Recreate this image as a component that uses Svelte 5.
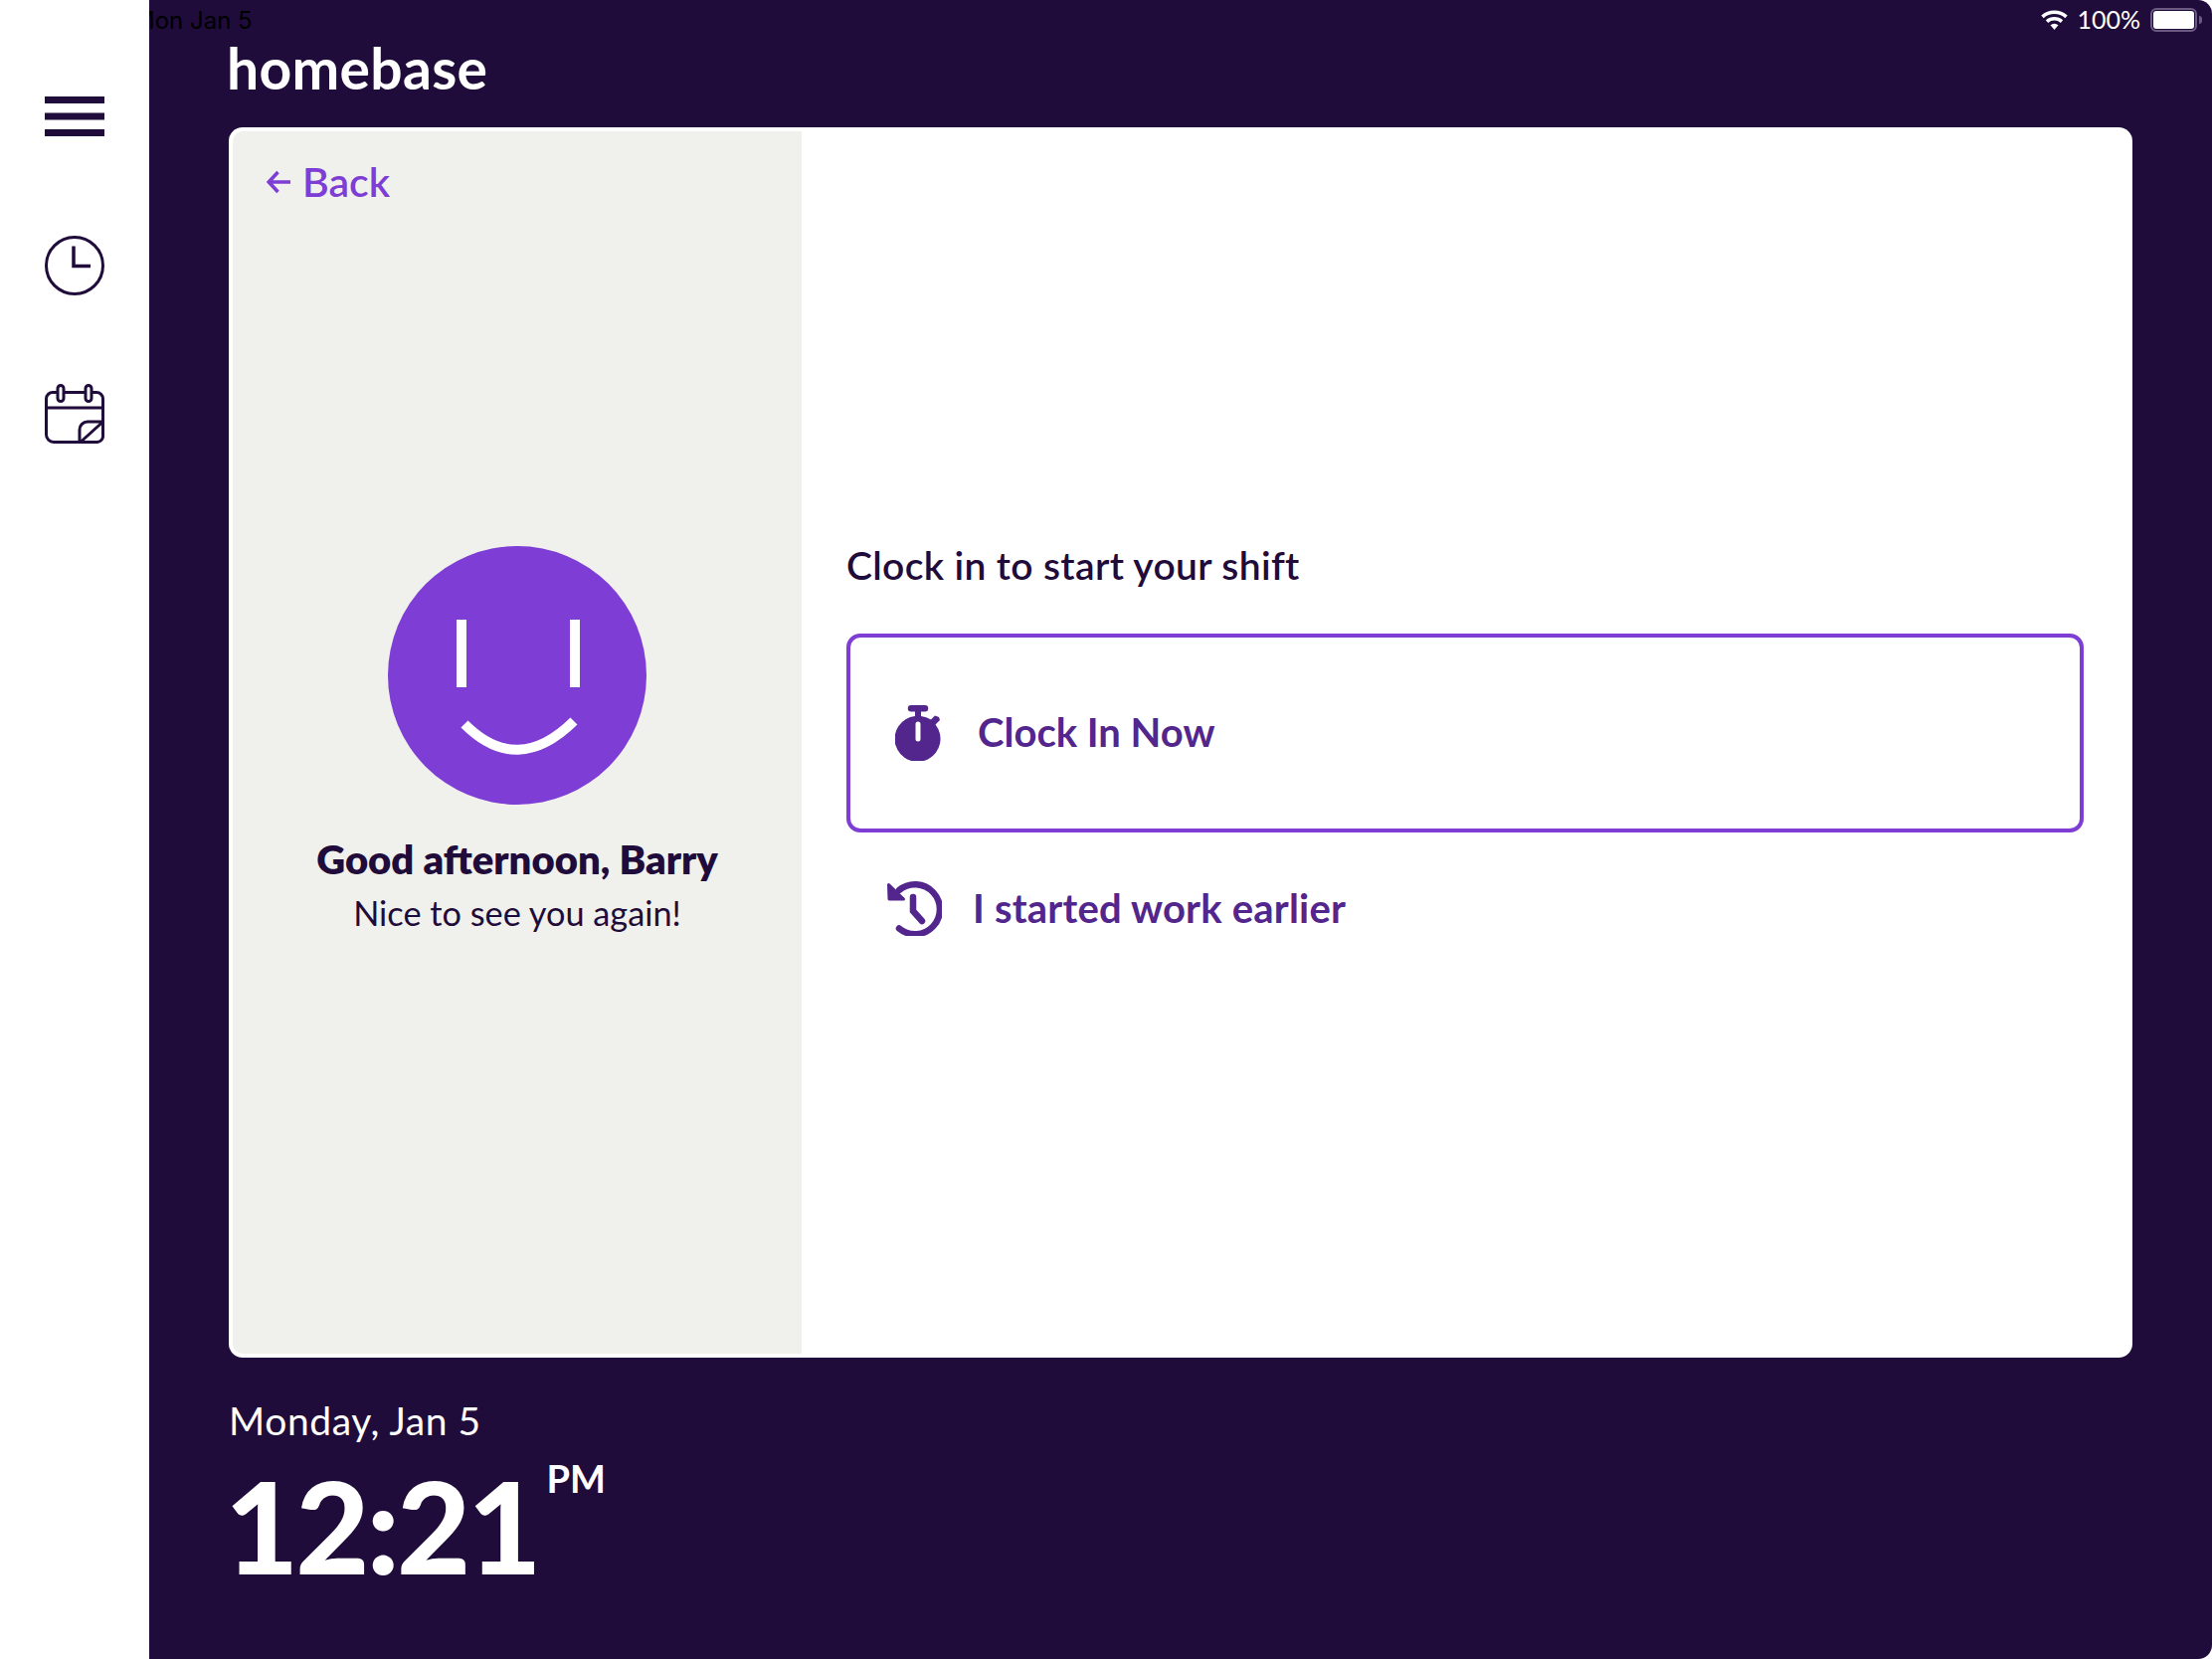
<script>
  const ink = '#1f0c3a';
</script>

<div class="screen">
  <nav class="rail">
    <svg class="i-menu" viewBox="0 0 60 40" aria-label="Menu"><path d="M0 3.500h60M0 20h60M0 36.500h60" stroke={ink} stroke-width="7" fill="none"/></svg>
    <svg class="i-clock" viewBox="0 0 60 60" aria-label="Clock"><circle cx="30" cy="30" r="28.500" fill="none" stroke={ink} stroke-width="3"/><path d="M29 10.500v20h17" fill="none" stroke={ink} stroke-width="3.500"/></svg>
    <svg class="i-cal" viewBox="0 0 60 60" aria-label="Schedule" fill="none" stroke={ink} stroke-width="3">
      <path d="M13 8.500H8a6.500 6.500 0 0 0-6.500 6.500v36A7.500 7.500 0 0 0 9 58.500h44a6 6 0 0 0 5.500-6.500V15A6.500 6.500 0 0 0 52 8.500h-5M19 8.500h22M1.500 24h57"/>
      <rect x="13" y="1.500" width="6" height="16" rx="3"/><rect x="41" y="1.500" width="6" height="16" rx="3"/>
      <path d="M35 58.500V46a8 8 0 0 1 8-8h15.500M37 57.500 58 38.500"/>
    </svg>
  </nav>

  <main class="main">
    <div class="status">
      <span class="carrier">Mon Jan 5</span>
      <div class="status-right">
        <svg class="wifi" viewBox="0 0 27 20" aria-hidden="true"><path d="M13.500 20l-4-4.700a6 6 0 0 1 8 0z" fill="#fff"/><path d="M1.500 6.800a18 18 0 0 1 24 0M6 11.600a11.500 11.500 0 0 1 15 0" fill="none" stroke="#fff" stroke-width="3.600"/></svg>
        <span class="pct">100%</span>
        <span class="batt"><span class="batt-fill"></span></span>
        <span class="nub"></span>
      </div>
    </div>

    <h1 class="brand">homebase</h1>

    <section class="card">
      <aside class="left">
        <a class="back" href="#back">
          <svg class="arrow" viewBox="0 0 25 24" aria-hidden="true"><path d="M24 12H3M11.500 2 2.200 12l9.300 10" fill="none" stroke="#7e3dd4" stroke-width="3.600"/></svg>
          <span>Back</span>
        </a>
        <div class="greet">
          <svg class="face" viewBox="0 0 260 260" aria-hidden="true">
            <circle cx="130" cy="130" r="130" fill="#7e3dd4"/>
            <path d="M74 74v68M188 74v68" stroke="#fff" stroke-width="10" fill="none"/>
            <path d="M77 179Q130 232 187 176" stroke="#fff" stroke-width="10" fill="none"/>
          </svg>
          <h2>Good afternoon, Barry</h2>
          <p>Nice to see you again!</p>
        </div>
      </aside>
      <div class="right">
        <h3>Clock in to start your shift</h3>
        <button class="primary">
          <svg class="watch" viewBox="0 0 46 56" aria-hidden="true"><path fill-rule="evenodd" fill="#52268c" d="M16 0h14a3 3 0 0 1 0 6.500h-4V11a23 23 0 0 1 10 3.500l4-4 4 1.500 1 3-4.500 4.500A23 23 0 1 1 20 11V6.500h-4A3 3 0 0 1 16 0zM20.500 19v15a2.500 2.500 0 0 0 5 0V19a2.500 2.500 0 0 0-5 0z"/></svg>
          <span class="now">Clock In Now</span>
        </button>
        <button class="secondary">
          <svg class="hist" viewBox="0 0 56 56" aria-hidden="true" fill="none" stroke="#52268c" stroke-width="6.500" stroke-linecap="round"><path d="M13 10A25 25 0 1 1 13 48.500"/><path d="M27 17v14l9 10"/><path d="M2.500 4.500 3 19h14.500z" fill="#52268c" stroke-width="3" stroke-linejoin="round"/></svg>
          <span>I started work earlier</span>
        </button>
      </div>
    </section>

    <footer class="foot">
      <div class="date">Monday, Jan 5</div>
      <div class="time"><span class="hm">12:21</span><span class="ampm">PM</span></div>
    </footer>
  </main>
</div>

<style>
  :global(body) { margin: 0; background: #fff; }
  .screen { display: flex; width: 2224px; height: 1668px; overflow: hidden; background: #fff; font-family: Lato, "Liberation Sans", sans-serif; color: #1f0c3a; }
  .rail { flex: none; width: 150px; background: #fff; display: flex; flex-direction: column; align-items: center; padding-top: 97px; box-sizing: border-box; }
  .i-menu { width: 60px; height: 40px; }
  .i-clock { width: 60px; height: 60px; margin-top: 100px; }
  .i-cal { width: 60px; height: 60px; margin-top: 89px; }

  .main { flex: 1; min-width: 0; overflow: hidden; background: #1f0c3a; padding: 0 80px; box-sizing: border-box; border-radius: 0 14px 14px 0; }
  .status { height: 40px; display: flex; justify-content: space-between; align-items: center; margin: 0 -70px 0 -80px; }
  .carrier { font: 24px Inter, "Liberation Sans", sans-serif; color: #000; margin-left: -16px; white-space: nowrap; }
  .status-right { display: flex; align-items: center; }
  .wifi { width: 27px; height: 20px; }
  .pct { font: 25px Lato, sans-serif; color: #fff; margin-left: 9px; position: relative; top: -1px; }
  .batt { width: 47px; height: 24px; box-sizing: border-box; border: 2px solid #6b5a82; border-radius: 6px; margin-left: 10px; padding: 1px; display: flex; }
  .batt-fill { flex: 1; background: #fff; border-radius: 3px; }
  .nub { width: 3px; height: 8px; background: #6b5a82; border-radius: 0 3px 3px 0; margin-left: 2px; }

  .brand { margin: 0 0 0 -2px; height: 88px; font-size: 57px; font-weight: 700; line-height: 56px; letter-spacing: .3px; color: #fff; }

  .card { display: flex; height: 1237px; box-sizing: border-box; background: #fff; border-radius: 14px; padding: 4px; }
  .left { flex: none; width: 572px; background: #f0f1ec; border-radius: 10px 0 0 10px; display: grid; }
  .back, .greet { grid-area: 1 / 1; }
  .back { align-self: start; justify-self: start; display: flex; align-items: center; margin: 23px 0 0 34px; color: #7e3dd4; font-size: 41px; font-weight: 600; line-height: 56px; text-decoration: none; }
  .arrow { width: 25px; height: 24px; margin-right: 11px; }
  .greet { display: flex; flex-direction: column; align-items: center; justify-content: center; padding-bottom: 6px; }
  .face { width: 260px; height: 260px; }
  h2 { margin: 32px 0 0; font-size: 40px; font-weight: 800; line-height: 46px; }
  p { margin: 10px 0 0; font-size: 34.300px; font-weight: 400; line-height: 42px; }

  .right { flex: 1; display: flex; flex-direction: column; justify-content: center; padding: 0 45px 8px 45px; }
  h3 { margin: 0 0 46px; font-size: 39px; font-weight: 600; line-height: 46px; letter-spacing: .35px; }
  button { font: inherit; background: none; display: flex; align-items: center; color: #52268c; font-size: 40px; font-weight: 700; cursor: pointer; }
  .primary { height: 200px; border: 4px solid #7e3dd4; border-radius: 14px; padding: 0 0 0 45px; }
  .now { margin-top: -2px; }
  .watch { width: 46px; height: 56px; margin-right: 37px; }
  .secondary { border: 0; padding: 0; margin: 48px 0 0 40px; height: 56px; letter-spacing: .2px; }
  .hist { width: 56px; height: 56px; margin-right: 31px; }

  .foot { color: #fff; padding-top: 40px; }
  .date { font-size: 39px; font-weight: 400; line-height: 46px; letter-spacing: .6px; }
  .time { display: flex; align-items: flex-start; line-height: 1; margin-left: -4px; }
  .hm { font-size: 128px; font-weight: 900; line-height: 128px; margin-top: 19px; letter-spacing: -3px; }
  .ampm { font-size: 38px; font-weight: 700; line-height: 38px; margin: 16px 0 0 8px; }
</style>
